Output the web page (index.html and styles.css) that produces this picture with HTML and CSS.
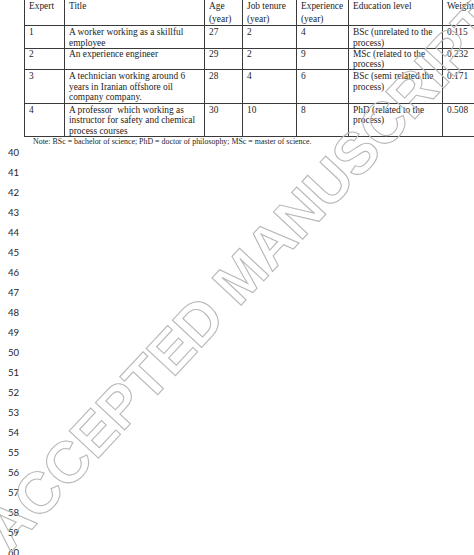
FILE: index.html
```html
<!DOCTYPE html>
<html>
<head>
<meta charset="utf-8">
<link rel="stylesheet" href="styles.css">
</head>
<body>
<div class="page">
  <table class="data">
    <colgroup>
      <col class="c1"><col class="c2"><col class="c3"><col class="c4"><col class="c5"><col class="c6"><col class="c7">
    </colgroup>
    <tr class="rh">
      <td>Expert</td><td>Title</td><td>Age<br>(year)</td><td>Job tenure<br>(year)</td><td>Experience<br>(year)</td><td>Education level</td><td>Weight</td>
    </tr>
    <tr class="r1">
      <td>1</td><td>A worker working as a skillful<br>employee</td><td>27</td><td>2</td><td>4</td><td>BSc (unrelated to the<br>process)</td><td>0.115</td>
    </tr>
    <tr class="r2">
      <td>2</td><td>An experience engineer</td><td>29</td><td>2</td><td>9</td><td>MSc (related to the<br>process)</td><td>0.232</td>
    </tr>
    <tr class="r3">
      <td>3</td><td>A technician working around 6<br>years in Iranian offshore oil<br>company company.</td><td>28</td><td>4</td><td>6</td><td>BSc (semi related the<br>process)</td><td>0.171</td>
    </tr>
    <tr class="r4">
      <td>4</td><td>A professor &nbsp;which working as<br>instructor for safety and chemical<br>process courses</td><td>30</td><td>10</td><td>8</td><td>PhD (related to the<br>process)</td><td>0.508</td>
    </tr>
  </table>
  <p class="note">Note: BSc = bachelor of science; PhD = doctor of philosophy; MSc = master of science.</p>
  <ol class="lines">
    <li>40</li><li>41</li><li>42</li><li>43</li><li>44</li><li>45</li><li>46</li><li>47</li><li>48</li><li>49</li><li>50</li>
    <li>51</li><li>52</li><li>53</li><li>54</li><li>55</li><li>56</li><li>57</li><li>58</li><li>59</li><li>60</li>
  </ol>
  <svg class="watermark" width="474" height="555" viewBox="0 0 474 555">
    <text x="0" y="0" transform="translate(10 553) rotate(-47)">ACCEPTED MANUSCRIPT</text>
  </svg>
</div>
</body>
</html>
```
FILE: styles.css
```css
html, body {
  margin: 0;
  padding: 0;
  background: #fff;
}
.page {
  position: relative;
  width: 474px;
  height: 555px;
  overflow: hidden;
}
.data {
  border-collapse: collapse;
  table-layout: fixed;
  width: 463px;
  margin: -1px 0 0 24px;
  font-family: "Liberation Serif", "Times New Roman", serif;
  font-size: 9.4px;
  color: #1e1e1e;
}
.c1 { width: 40px; }
.c2 { width: 140px; }
.c3 { width: 38px; }
.c4 { width: 54px; }
.c5 { width: 52px; }
.c6 { width: 94px; }
.c7 { width: 45px; }
.data td {
  border: 1px solid #3a3a3a;
  padding: 1px 1px 0 4px;
  vertical-align: top;
  line-height: 10.5px;
  white-space: nowrap;
  overflow: hidden;
}
.rh td { line-height: 12.5px; padding-top: 0; height: 23px; }
.r1 td { height: 21px; }
.r2 td { height: 20px; line-height: 10px; padding-top: 0; }
.r3 td { height: 30px; }
.r4 td { height: 30px; }
.note {
  margin: 0 0 -4px 33px;
  font-family: "Liberation Serif", "Times New Roman", serif;
  font-size: 7.9px;
  line-height: 10px;
  color: #1e1e1e;
}
.lines {
  list-style: none;
  margin: 0;
  padding: 0 0 0 8px;
  font-family: Lato, "Open Sans", sans-serif;
  font-size: 9.6px;
  line-height: 20px;
  color: #262626;
}
.watermark {
  position: absolute;
  left: 0;
  top: 0;
  pointer-events: none;
}
.watermark text {
  font-family: "Liberation Sans", Arial, sans-serif;
  font-weight: bold;
  font-size: 58px;
  fill: none;
  stroke: #b8b8b8;
  stroke-width: 1.1;
}
```
